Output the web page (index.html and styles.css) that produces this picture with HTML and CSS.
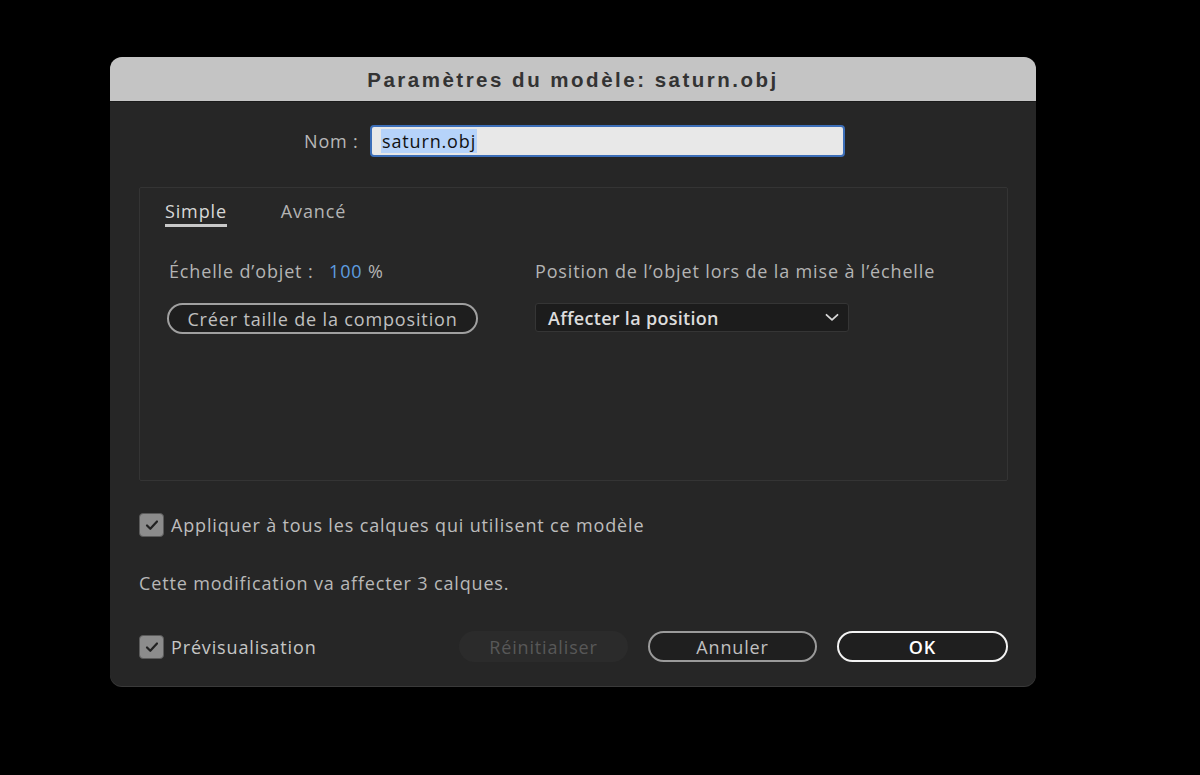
FILE: index.html
```html
<!DOCTYPE html>
<html lang="fr">
<head>
<meta charset="utf-8">
<link rel="stylesheet" href="styles.css">
</head>
<body>
<div class="dialog">
  <div class="titlebar">Paramètres du modèle: saturn.obj</div>
  <div class="body">
    <div class="name-row">
      <span class="name-label">Nom :</span>
      <div class="input"><span class="sel">saturn.obj</span></div>
    </div>
    <div class="panel">
      <div class="tabs">
        <span class="tab active">Simple</span>
        <span class="tab">Avancé</span>
      </div>
      <div class="cols">
        <div class="col left">
          <div class="scale">Échelle d’objet : <span class="num">100</span> %</div>
          <div class="pill wide">Créer taille de la composition</div>
        </div>
        <div class="col right">
          <div class="poslabel">Position de l’objet lors de la mise à l’échelle</div>
          <div class="select">
            <span>Affecter la position</span>
            <svg width="14" height="9" viewBox="0 0 14 9"><path d="M1.5 1.8 L7 6.8 L12.5 1.8" fill="none" stroke="#d8d8d8" stroke-width="1.8" stroke-linecap="round" stroke-linejoin="round"/></svg>
          </div>
        </div>
      </div>
    </div>
    <div class="check-row apply">
      <span class="box"><svg width="16" height="14" viewBox="0 0 16 14"><path d="M3 7.5 L6.3 10.8 L13 3.5" fill="none" stroke="#222" stroke-width="2.2" stroke-linecap="round" stroke-linejoin="round"/></svg></span>
      <span>Appliquer à tous les calques qui utilisent ce modèle</span>
    </div>
    <div class="info">Cette modification va affecter 3 calques.</div>
    <div class="footer">
      <div class="check-row">
        <span class="box"><svg width="16" height="14" viewBox="0 0 16 14"><path d="M3 7.5 L6.3 10.8 L13 3.5" fill="none" stroke="#222" stroke-width="2.2" stroke-linecap="round" stroke-linejoin="round"/></svg></span>
        <span class="prev">Prévisualisation</span>
      </div>
      <div class="buttons">
        <div class="btn disabled">Réinitialiser</div>
        <div class="btn cancel">Annuler</div>
        <div class="btn ok">OK</div>
      </div>
    </div>
  </div>
</div>
</body>
</html>
```
FILE: styles.css
```css
html, body {
  margin: 0;
  padding: 0;
  background: #000;
}
body {
  width: 1200px;
  height: 775px;
  font-family: "Open Sans", "Noto Sans", sans-serif;
  letter-spacing: 0.85px;
}
.dialog {
  position: relative;
  margin: 57px 0 0 110px;
  width: 926px;
  height: 629px;
  border-radius: 12px;
  overflow: hidden;
  background: #262626;
  display: flex;
  flex-direction: column;
  box-shadow: 0 1px 0 #3a3a3a;
}
.titlebar {
  height: 43px;
  background: #c4c4c4;
  border-bottom: 1px solid #1a1a1a;
  display: flex;
  align-items: center;
  justify-content: center;
  font-family: "Liberation Sans", Arial, sans-serif;
  font-weight: bold;
  font-size: 20.5px;
  letter-spacing: 2.5px;
  color: #333;
  padding-top: 1px;
}
.body {
  flex: 1;
  padding: 0 28px 0 29px;
  display: flex;
  flex-direction: column;
}
.name-row {
  display: flex;
  align-items: center;
  margin-top: 23px;
  margin-left: 165px;
}
.name-label {
  font-size: 18px;
  color: #b8b8b8;
  width: 66px;
}
.input {
  width: 462px;
  height: 28px;
  background: #e8e8e8;
  border: 2px solid #3c6eb8;
  border-radius: 4px;
  display: flex;
  align-items: center;
  padding-left: 9px;
  box-sizing: content-box;
}
.sel {
  background: #b6d3fa;
  color: #111;
  font-size: 18px;
  line-height: 24px;
  padding: 0 1px;
}
.panel {
  margin-top: 30px;
  height: 292px;
  border: 1px solid #343434;
  border-radius: 2px;
  background: #272727;
  padding: 0 0 0 25px;
}
.tabs {
  display: flex;
  gap: 54px;
  margin-top: 10px;
}
.tab {
  font-size: 18px;
  color: #b4b4b4;
  padding-bottom: 0;
  border-bottom: 3px solid transparent;
  line-height: 26px;
}
.tab.active {
  color: #d8d8d8;
  border-bottom-color: #c8c8c8;
}
.cols {
  display: flex;
  margin-top: 31px;
}
.col.left {
  width: 368px;
  padding-left: 2px;
}
.scale {
  font-size: 18px;
  color: #b4b4b4;
  line-height: 26px;
  padding-left: 2px;
}
.num {
  color: #5e9ee0;
  margin-left: 10px;
}
.pill {
  margin-top: 19px;
  height: 31px;
  border: 2px solid #a0a0a0;
  border-radius: 16px;
  box-sizing: border-box;
  display: flex;
  align-items: center;
  justify-content: center;
  font-size: 18px;
  color: #c0c0c0;
  background: #1e1e1e;
}
.pill.wide {
  width: 311px;
}
.poslabel {
  font-size: 18px;
  color: #b4b4b4;
  line-height: 26px;
}
.select {
  margin-top: 19px;
  width: 314px;
  height: 29px;
  box-sizing: border-box;
  background: #1c1c1c;
  border: 1px solid #353535;
  border-radius: 3px;
  display: flex;
  align-items: center;
  justify-content: space-between;
  padding: 0 9px 0 12px;
  font-size: 18px;
  font-weight: 600;
  letter-spacing: 0.3px;
  color: #dcdcdc;
}
.check-row {
  display: flex;
  align-items: center;
  gap: 7px;
  font-size: 18px;
  color: #bdbdbd;
}
.check-row.apply {
  margin-top: 32px;
}
.box {
  width: 25px;
  height: 24px;
  box-sizing: border-box;
  background: #8c8c8c;
  border: 1px solid #5a5a5a;
  border-radius: 4px;
  display: flex;
  align-items: center;
  justify-content: center;
}
.info {
  margin-top: 34px;
  font-size: 18px;
  color: #b8b8b8;
}
.footer {
  margin-top: 36px;
  display: flex;
  align-items: center;
  justify-content: space-between;
}
.prev {
  color: #c6c6c6;
}
.buttons {
  display: flex;
  gap: 20px;
}
.btn {
  width: 169px;
  height: 31px;
  box-sizing: border-box;
  border-radius: 16px;
  display: flex;
  align-items: center;
  justify-content: center;
  font-size: 18px;
}
.btn.disabled {
  background: #2b2b2b;
  color: #585858;
}
.btn.cancel {
  border: 2px solid #9a9a9a;
  color: #c0c0c0;
  background: #1f1f1f;
}
.btn.ok {
  width: 171px;
  border: 2px solid #f2f2f2;
  color: #fff;
  font-weight: 600;
  background: #1f1f1f;
}
```
